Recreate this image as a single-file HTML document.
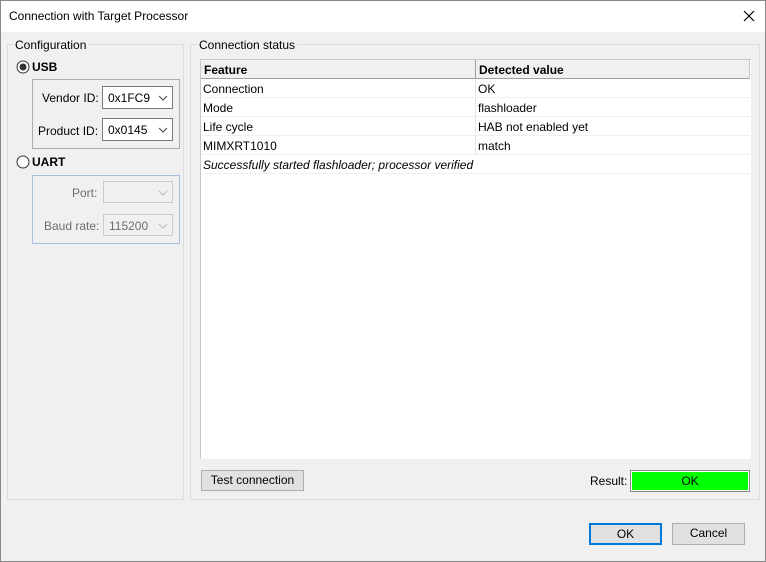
<!DOCTYPE html><html><head><style>
*{box-sizing:border-box}body{margin:0;width:766px;height:562px;background:#f0f0f0;font-family:"Liberation Sans",sans-serif;font-size:12px;color:#000;position:relative;overflow:hidden}
.a{position:absolute}
.win{left:0;top:0;width:766px;height:562px;border:1px solid #888}
.gb{border:1px solid #dcdcdc}
.lg{background:#f0f0f0;padding:0 2px}
.cb{border:1px solid #7a7a7a;background:#fff;height:23px}
.cb span{position:absolute;left:5px;top:4px}
.cb svg{position:absolute;right:4px;top:8px}
.dis{border-color:#ccc;background:#f0f0f0}.dis span{color:#6d6d6d}
.btn{border:1px solid #adadad;background:#e1e1e1;text-align:center;line-height:19px}
.row{left:201px;width:549px;height:19px;border-bottom:1px solid #f0f0f0}
.row span{position:absolute;top:3px}
</style></head><body>
<div class="a win"></div>
<div class="a" style="left:1px;top:1px;width:764px;height:31px;background:#fff"></div>
<div class="a" style="left:9px;top:9px">Connection with Target Processor</div>
<svg class="a" style="left:743px;top:10px" width="12" height="12"><path d="M1 1L11 11M11 1L1 11" stroke="#000" stroke-width="1.2"/></svg>

<div class="a gb" style="left:7px;top:44px;width:177px;height:456px"></div>
<div class="a lg" style="left:13px;top:38px">Configuration</div>
<svg class="a" style="left:16px;top:60px" width="14" height="14"><circle cx="7" cy="7" r="6" fill="#fff" stroke="#333"/><circle cx="7" cy="7" r="3.5" fill="#333"/></svg>
<div class="a" style="left:32px;top:60px;font-weight:bold">USB</div>
<div class="a" style="left:32px;top:79px;width:148px;height:70px;border:1px solid #adadad"></div>
<div class="a" style="left:42px;top:91px">Vendor ID:</div>
<div class="a cb" style="left:102px;top:86px;width:71px"><span>0x1FC9</span><svg width="10" height="6"><path d="M1 1L5 5L9 1" fill="none" stroke="#444"/></svg></div>
<div class="a" style="left:38px;top:124px">Product ID:</div>
<div class="a cb" style="left:102px;top:118px;width:71px"><span>0x0145</span><svg width="10" height="6"><path d="M1 1L5 5L9 1" fill="none" stroke="#444"/></svg></div>
<svg class="a" style="left:16px;top:155px" width="14" height="14"><circle cx="7" cy="7" r="6" fill="#fff" stroke="#333"/></svg>
<div class="a" style="left:32px;top:155px;font-weight:bold">UART</div>
<div class="a" style="left:32px;top:175px;width:148px;height:69px;border:1px solid #a4bfdf"></div>
<div class="a" style="left:72px;top:186px;color:#6d6d6d">Port:</div>
<div class="a cb dis" style="left:103px;top:181px;width:70px;height:22px"><svg width="10" height="6"><path d="M1 1L5 5L9 1" fill="none" stroke="#bbb"/></svg></div>
<div class="a" style="left:44px;top:219px;color:#6d6d6d">Baud rate:</div>
<div class="a cb dis" style="left:103px;top:214px;width:70px;height:22px"><span>115200</span><svg width="10" height="6"><path d="M1 1L5 5L9 1" fill="none" stroke="#bbb"/></svg></div>

<div class="a gb" style="left:190px;top:44px;width:570px;height:456px"></div>
<div class="a lg" style="left:197px;top:38px">Connection status</div>
<div class="a" style="left:200px;top:59px;width:551px;height:400px;background:#fff;border:1px solid #c8c8c8;border-bottom:none;border-right:none"></div>
<div class="a" style="left:201px;top:60px;width:549px;height:19px;background:#f0f0f0;border-bottom:1px solid #a0a0a0;border-right:1px solid #c8c8c8"></div>
<div class="a" style="left:475px;top:60px;width:1px;height:95px;background:#e5e5e5"></div>
<div class="a" style="left:475px;top:60px;width:1px;height:19px;background:#a0a0a0"></div>
<div class="a" style="left:204px;top:63px;font-weight:bold">Feature</div>
<div class="a" style="left:479px;top:63px;font-weight:bold">Detected value</div>
<div class="a row" style="top:79px"><span style="left:2px">Connection</span><span style="left:277px">OK</span></div>
<div class="a row" style="top:98px"><span style="left:2px">Mode</span><span style="left:277px">flashloader</span></div>
<div class="a row" style="top:117px"><span style="left:2px">Life cycle</span><span style="left:277px">HAB not enabled yet</span></div>
<div class="a row" style="top:136px"><span style="left:2px">MIMXRT1010</span><span style="left:277px">match</span></div>
<div class="a row" style="top:155px"><span style="left:2px;font-style:italic">Successfully started flashloader; processor verified</span></div>

<div class="a btn" style="left:201px;top:470px;width:103px;height:21px">Test connection</div>
<div class="a" style="left:590px;top:474px">Result:</div>
<div class="a" style="left:630px;top:470px;width:120px;height:22px;border:1px solid #888;background:#fff;padding:1px"><div style="background:#00ff00;height:18px;text-align:center;line-height:18px">OK</div></div>

<div class="a btn" style="left:589px;top:523px;width:73px;height:22px;border:2px solid #0078d7;line-height:18px">OK</div>
<div class="a btn" style="left:672px;top:523px;width:73px;height:22px">Cancel</div>
</body></html>
